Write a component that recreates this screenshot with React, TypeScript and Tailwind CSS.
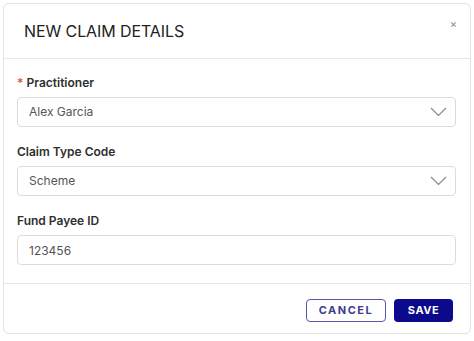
import React, { useState } from 'react';

const font = { fontFamily: 'Inter, "Liberation Sans", sans-serif' };

function Chevron() {
  return (
    <svg width="17" height="10" viewBox="0 0 17 10" fill="none" className="shrink-0">
      <path d="M1 1l7.5 7.5L16 1" stroke="#8a8a8a" strokeWidth="1.2" />
    </svg>
  );
}

function SelectField({ label, value, required }: { label: string; value: string; required?: boolean }) {
  return (
    <div>
      <label className="block h-[15px] text-[12px] leading-[15px] font-semibold text-[#2f2f2f] mb-[7px]">
        {required && <span className="text-[#e0524b] mr-[3px]">*</span>}
        {label}
      </label>
      <div className="h-[30px] flex items-center justify-between border border-[#dcdcdc] rounded-[4px] pl-[11px] pr-[8px]">
        <span className="text-[12px] text-[#555]">{value}</span>
        <Chevron />
      </div>
    </div>
  );
}

export default function App() {
  const [payee, setPayee] = useState('123456');
  return (
    <div className="w-[474px] h-[341px] bg-white p-[3px]" style={font}>
      <div className="w-[468px] h-[331px] border border-[#e2e2e2] rounded-[6px] flex flex-col">
        <div className="h-[55px] border-b border-[#e6e6e6] flex items-start justify-between pl-[20px] pr-[13px]">
          <h2 className="mt-[17px] text-[16px] leading-[20px] text-[#222] tracking-[-0.1px]">NEW CLAIM DETAILS</h2>
          <button className="mt-[15px] text-[11px] text-[#888] leading-none">×</button>
        </div>
        <div className="flex flex-col gap-[17px] pl-[13px] pr-[14px] pt-[16px] pb-[18px] border-b border-[#e6e6e6]">
          <SelectField label="Practitioner" value="Alex Garcia" required />
          <SelectField label="Claim Type Code" value="Scheme" />
          <div>
            <label className="block h-[15px] text-[12px] leading-[15px] font-semibold text-[#2f2f2f] mb-[7px]">
              Fund Payee ID
            </label>
            <input
              value={payee}
              onChange={(e) => setPayee(e.target.value)}
              className="w-full h-[30px] border border-[#dcdcdc] rounded-[4px] px-[11px] text-[12px] text-[#555] outline-none"
            />
          </div>
        </div>
        <div className="flex-1 flex items-center justify-end gap-[8px] pr-[17px] pt-[3px]">
          <button className="w-[80px] h-[23px] border border-[#5a57ad] rounded-[4px] text-[11px] font-bold tracking-[1.5px] text-[#3f3d8f]">
            CANCEL
          </button>
          <button className="w-[59px] h-[23px] bg-[#0c0a8c] rounded-[4px] text-[11px] font-bold tracking-[0.5px] text-white">
            SAVE
          </button>
        </div>
      </div>
    </div>
  );
}
